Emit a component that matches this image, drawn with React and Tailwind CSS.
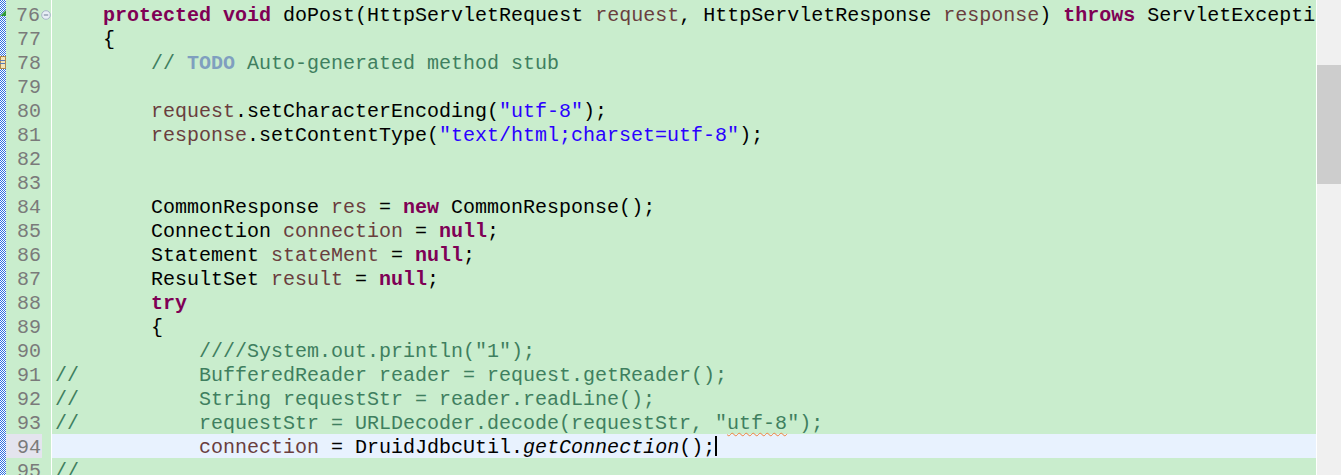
import React from 'react';

const K = 'text-[#7f0055] font-bold';
const V = 'text-[#6a3e3e]';
const S = 'text-[#2a00ff]';
const C = 'text-[#3f7f5f]';
const P = 'text-black';

const lines = [
  { n: 76, fold: true, t: [['    ', P], ['protected', K], [' ', P], ['void', K], [' doPost(HttpServletRequest ', P], ['request', V], [', HttpServletResponse ', P], ['response', V], [') ', P], ['throws', K], [' ServletException, IOException', P]] },
  { n: 77, t: [['    {', P]] },
  { n: 78, t: [['        // ', C], ['TODO', 'text-[#7f9fbf] font-bold'], [' Auto-generated method stub', C]] },
  { n: 79, t: [] },
  { n: 80, t: [['        ', P], ['request', V], ['.setCharacterEncoding(', P], ['"utf-8"', S], [');', P]] },
  { n: 81, t: [['        ', P], ['response', V], ['.setContentType(', P], ['"text/html;charset=utf-8"', S], [');', P]] },
  { n: 82, t: [] },
  { n: 83, t: [] },
  { n: 84, t: [['        CommonResponse ', P], ['res', V], [' = ', P], ['new', K], [' CommonResponse();', P]] },
  { n: 85, t: [['        Connection ', P], ['connection', V], [' = ', P], ['null', K], [';', P]] },
  { n: 86, t: [['        Statement ', P], ['stateMent', V], [' = ', P], ['null', K], [';', P]] },
  { n: 87, t: [['        ResultSet ', P], ['result', V], [' = ', P], ['null', K], [';', P]] },
  { n: 88, t: [['        ', P], ['try', K]] },
  { n: 89, t: [['        {', P]] },
  { n: 90, t: [['            ////System.out.println("1");', C]] },
  { n: 91, t: [['//          BufferedReader reader = request.getReader();', C]] },
  { n: 92, t: [['//          String requestStr = reader.readLine();', C]] },
  { n: 93, t: [['//          requestStr = URLDecoder.decode(requestStr, "', C], ['utf-8', C + ' underline decoration-wavy decoration-[#f0803c] decoration-1 underline-offset-[3px]'], ['");', C]] },
  { n: 94, current: true, t: [['            ', P], ['connection', V], [' = DruidJdbcUtil.', P], ['getConnection', 'text-black italic'], ['();', P]] },
  { n: 95, t: [['//', C]] },
];

// dithered blue ruler strip on the far left, with the override / task markers on it
function LeftStrip() {
  return (
    <svg width="6" height="475" className="block" shapeRendering="crispEdges">
      <defs>
        <pattern id="dots" width="2" height="2" patternUnits="userSpaceOnUse">
          <rect width="2" height="2" fill="#ffffff" />
          <rect x="0" y="0" width="1" height="1" fill="#2f6fe0" />
          <rect x="1" y="1" width="1" height="1" fill="#2f6fe0" />
        </pattern>
      </defs>
      <rect width="6" height="475" fill="url(#dots)" />
      <polygon points="0,16 6,10 6,16" fill="#2e9a3a" shapeRendering="auto" />
      <rect x="0.5" y="56.5" width="5" height="12" fill="#f3e4b8" stroke="#b08a4a" strokeWidth="1" />
      <rect x="0" y="60" width="5" height="1" fill="#5a7ab8" />
      <rect x="0" y="63" width="5" height="1" fill="#5a7ab8" />
    </svg>
  );
}

export default function App() {
  return (
    <div className="flex h-[475px] w-[1341px] overflow-hidden bg-[#c9edcd] font-['Liberation_Mono',monospace] text-[20px] leading-[20px]">
      <div className="w-[6px] shrink-0">
        <LeftStrip />
      </div>
      <div className="w-[45px] shrink-0 pt-[2px]">
        {lines.map(l => (
          <div key={l.n} className="flex h-[24px]">
            <div className={`w-[36px] pr-[1px] pt-[4px] text-right text-[#7a7a7a] ${l.current ? 'bg-[#e4e4ee]' : ''}`}>{l.n}</div>
            <div className="flex flex-1 items-center justify-center pt-[2px]">
              {l.fold && (
                <svg width="10" height="10" viewBox="0 0 10 10">
                  <circle cx="5" cy="5" r="4.3" fill="#e8eef6" stroke="#a6b4c8" strokeWidth="1" />
                  <line x1="2.8" y1="5" x2="7.2" y2="5" stroke="#6c7c94" strokeWidth="1" />
                </svg>
              )}
            </div>
          </div>
        ))}
      </div>
      <div className="w-[1px] shrink-0 bg-white" />
      <div className="min-w-0 flex-1 overflow-hidden pt-[2px]">
        {lines.map(l => (
          <div key={l.n} className={`flex h-[24px] pl-[3px] pt-[4px] whitespace-pre ${l.current ? 'bg-[#e8f2fe]' : ''}`}>
            {l.t.map((tok, i) => (
              <span key={i} className={tok[1]}>{tok[0]}</span>
            ))}
            {l.current && <span className="-mt-[2px] mb-[2px] w-[2px] bg-black" />}
          </div>
        ))}
      </div>
      <div className="w-[1px] shrink-0 bg-white" />
      <div className="w-[24px] shrink-0 bg-[#f0f0f0] pt-[65px]">
        <div className="h-[119px] bg-[#cdcdcd]" />
      </div>
    </div>
  );
}
